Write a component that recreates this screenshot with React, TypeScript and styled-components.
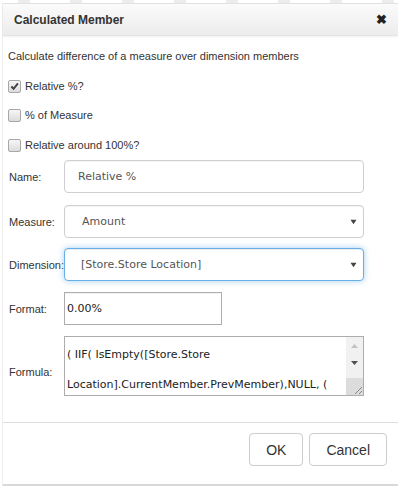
import React from 'react';
import styled, { createGlobalStyle } from 'styled-components';

const Global = createGlobalStyle`
  html, body { margin: 0; padding: 0; background: #fff; }
  body { font-family: "Liberation Sans", Arial, sans-serif; color: #333; }
`;

const Page = styled.div`
  width: 398px;
  height: 489px;
  overflow: hidden;
  background: #fff;
`;

const Backdrop = styled.div`
  height: 3px;
  background: repeating-linear-gradient(90deg, #fff 0 18px, #ececec 18px 30px, #fff 30px 52px);
`;

const Dialog = styled.div`
  margin-left: 2px;
  border-left: 1px solid #eee;
  border-top: 1px solid #e2e2e2;
  display: flex;
  flex-direction: column;
`;

const Header = styled.div`
  height: 31px;
  display: flex;
  align-items: center;
  justify-content: space-between;
  padding: 0 11px 0 11px;
  background: linear-gradient(#fbfbfb, #ececec);
  border-bottom: 1px solid #e4e4e4;
  box-shadow: 0 1px 2px rgba(0, 0, 0, 0.06);
`;

const Title = styled.span`
  font-size: 12px;
  font-weight: bold;
  color: #333;
`;

const Close = styled.span`
  font-size: 13px;
  font-weight: bold;
  color: #222;
  line-height: 1;
`;

const Body = styled.div`
  padding: 12px 0 0 5px;
  display: flex;
  flex-direction: column;
  font-size: 11px;
`;

const Desc = styled.div`
  height: 16px;
  line-height: 16px;
`;

const CheckRow = styled.label<{ $gap: number }>`
  display: flex;
  align-items: center;
  height: 16px;
  margin-top: ${(p) => p.$gap}px;
  gap: 4px;
`;

const Box = styled.span`
  width: 11px;
  height: 11px;
  border: 1px solid #a7a7a7;
  border-radius: 2px;
  background: linear-gradient(#f6f6f6, #dcdcdc);
  display: flex;
  align-items: center;
  justify-content: center;
`;

const FieldRow = styled.div<{ $gap: number }>`
  display: flex;
  align-items: center;
  margin-top: ${(p) => p.$gap}px;
`;

const Label = styled.span<{ $drop?: number }>`
  width: 55px;
  padding-left: 1px;
  flex: none;
  color: #333;
  margin-top: ${(p) => p.$drop ?? 0}px;
`;

const Input = styled.div<{ $w: number; $pad?: number; $focus?: boolean; $square?: boolean }>`
  box-sizing: border-box;
  width: ${(p) => p.$w}px;
  height: 33px;
  display: flex;
  align-items: center;
  justify-content: space-between;
  padding: ${(p) => (p.$square ? '0 2px' : `0 6px 0 ${p.$pad ?? 13}px`)};
  border: 1px solid ${(p) => (p.$focus ? '#66afe9' : p.$square ? '#adadad' : '#cfcfcf')};
  border-radius: ${(p) => (p.$square ? '0' : '4px')};
  box-shadow: ${(p) =>
    p.$focus ? 'inset 0 1px 1px rgba(0,0,0,.075), 0 0 6px rgba(102,175,233,.6)' : 'inset 0 1px 1px rgba(0,0,0,.05)'};
  font-family: "DejaVu Sans", Verdana, sans-serif;
  font-size: 11px;
  color: #555;
  background: #fff;
`;

const Value = styled.span<{ $dark?: boolean }>`
  color: ${(p) => (p.$dark ? '#222' : '#555')};
`;

const FormulaBox = styled.div`
  box-sizing: border-box;
  width: 300px;
  height: 60px;
  border: 1px solid #adadad;
  display: flex;
`;

const FormulaText = styled.div`
  flex: 1;
  padding: 3px 2px;
  font-family: "DejaVu Sans", Verdana, sans-serif;
  font-size: 11px;
  line-height: 30px;
  color: #222;
  overflow: hidden;
`;

const Scroll = styled.div`
  width: 17px;
  display: flex;
  flex-direction: column;
  background: #f1f1f1;
`;

const Arrow = styled.div`
  height: 17px;
  display: flex;
  align-items: center;
  justify-content: center;
`;

const Track = styled.div`
  flex: 1;
`;

const Grip = styled.div`
  height: 17px;
  background: #dcdcdc;
  display: flex;
  align-items: flex-end;
  justify-content: flex-end;
`;

const Footer = styled.div`
  margin-top: 26px;
  border-top: 1px solid #dedede;
  height: 64px;
  display: flex;
  justify-content: flex-end;
  align-items: flex-start;
  gap: 6px;
  padding: 10px 11px 0 0;
  border-bottom: 2px solid #d9d9d9;
  box-sizing: border-box;
`;

const Button = styled.button`
  height: 33px;
  padding: 0 16px;
  border: 1px solid #ccc;
  border-radius: 4px;
  background: #fff;
  font-family: "Liberation Sans", Arial, sans-serif;
  font-size: 14px;
  color: #333;
`;

const Caret = () => (
  <svg width="7" height="6" viewBox="0 0 8 7">
    <path d="M0.5 1 L7.5 1 L4 6 Z" fill="#444" />
  </svg>
);

const Check = () => (
  <svg width="9" height="9" viewBox="0 0 10 10">
    <path d="M1.5 5 L4 7.5 L8.8 1.6" stroke="#444" strokeWidth="2.2" fill="none" />
  </svg>
);

export default function App() {
  return (
    <Page>
      <Global />
      <Backdrop />
      <Dialog>
        <Header>
          <Title>Calculated Member</Title>
          <Close>✖</Close>
        </Header>
        <Body>
          <Desc>Calculate difference of a measure over dimension members</Desc>
          <CheckRow $gap={14}>
            <Box>
              <Check />
            </Box>
            Relative %?
          </CheckRow>
          <CheckRow $gap={13}>
            <Box />% of Measure
          </CheckRow>
          <CheckRow $gap={14}>
            <Box />
            Relative around 100%?
          </CheckRow>
          <FieldRow $gap={7}>
            <Label>Name:</Label>
            <Input $w={300}>
              <Value>Relative %</Value>
            </Input>
          </FieldRow>
          <FieldRow $gap={12}>
            <Label>Measure:</Label>
            <Input $w={300} $pad={17}>
              <Value>Amount</Value>
              <Caret />
            </Input>
          </FieldRow>
          <FieldRow $gap={10}>
            <Label>Dimension:</Label>
            <Input $w={300} $pad={16} $focus>
              <Value>[Store.Store Location]</Value>
              <Caret />
            </Input>
          </FieldRow>
          <FieldRow $gap={11}>
            <Label>Format:</Label>
            <Input $w={158} $square>
              <Value $dark>0.00%</Value>
            </Input>
          </FieldRow>
          <FieldRow $gap={11}>
            <Label $drop={12}>Formula:</Label>
            <FormulaBox>
              <FormulaText>( IIF( IsEmpty([Store.Store Location].CurrentMember.PrevMember),NULL, (</FormulaText>
              <Scroll>
                <Arrow>
                  <svg width="7" height="4" viewBox="0 0 7 4">
                    <path d="M0 4 L3.5 0 L7 4 Z" fill="#c2c2c2" />
                  </svg>
                </Arrow>
                <Arrow>
                  <svg width="7" height="4" viewBox="0 0 7 4">
                    <path d="M0 0 L7 0 L3.5 4 Z" fill="#505050" />
                  </svg>
                </Arrow>
                <Track />
                <Grip>
                  <svg width="10" height="10" viewBox="0 0 10 10">
                    <path d="M9 2 L2 9 M9 6 L6 9" stroke="#888" strokeWidth="1" />
                  </svg>
                </Grip>
              </Scroll>
            </FormulaBox>
          </FieldRow>
        </Body>
        <Footer>
          <Button>OK</Button>
          <Button>Cancel</Button>
        </Footer>
      </Dialog>
    </Page>
  );
}
